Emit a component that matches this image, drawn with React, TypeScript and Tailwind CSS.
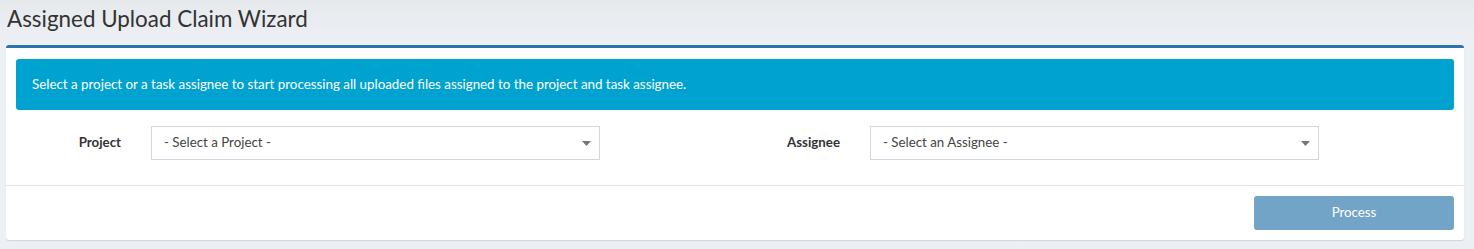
function Caret() {
  return (
    <svg width="9" height="5" viewBox="0 0 9 5" className="shrink-0">
      <path d="M0 0h9L4.5 5z" fill="#777" />
    </svg>
  );
}

function SelectBox({ placeholder }: { placeholder: string }) {
  return (
    <div className="flex h-[34px] w-[449px] items-center justify-between border border-[#d2d6de] bg-white pl-[12px] pr-[8px] text-[13.3px] text-[#444]">
      <span>{placeholder}</span>
      <Caret />
    </div>
  );
}

export default function App() {
  return (
    <div
      className="h-[249px] w-[1474px] bg-gradient-to-b from-[#e6e9ec] to-[#ecf0f5] to-[40px] pl-[6px] pr-[10px] pt-[6px] text-[#333]"
      style={{ fontFamily: "Lato, 'Open Sans', sans-serif" }}
    >
      <h1 className="ml-[1px] h-[39px] text-[22.4px] font-normal leading-[25px] text-[#333]">
        Assigned Upload Claim Wizard
      </h1>
      <div className="rounded-[3px] border-t-[3px] border-[#2a73ad] bg-white shadow-[0_1px_1px_rgba(0,0,0,0.12)]">
        <div className="px-[10px] pt-[11px]">
          <div className="flex h-[51px] items-center rounded-[3px] bg-[#00a2d0] px-[16px] text-[13.35px] text-white">
            Select a project or a task assignee to start processing all uploaded files assigned to the project and task assignee.
          </div>
          <div className="flex h-[75px] items-start pt-[16px]">
            <div className="flex w-[719px] items-center">
              <div className="w-[105px] text-right text-[13.3px] font-bold text-[#333]">Project</div>
              <div className="ml-[30px]">
                <SelectBox placeholder="- Select a Project -" />
              </div>
            </div>
            <div className="flex items-center">
              <div className="w-[105px] text-right text-[13.3px] font-bold text-[#333]">Assignee</div>
              <div className="ml-[30px]">
                <SelectBox placeholder="- Select an Assignee -" />
              </div>
            </div>
          </div>
        </div>
        <div className="flex h-[55px] items-center justify-end border-t border-[#e3e3e3] px-[10px]">
          <button className="h-[34px] w-[200px] rounded-[3px] bg-[#72a4c7] text-[13.3px] text-white">
            Process
          </button>
        </div>
      </div>
    </div>
  );
}
